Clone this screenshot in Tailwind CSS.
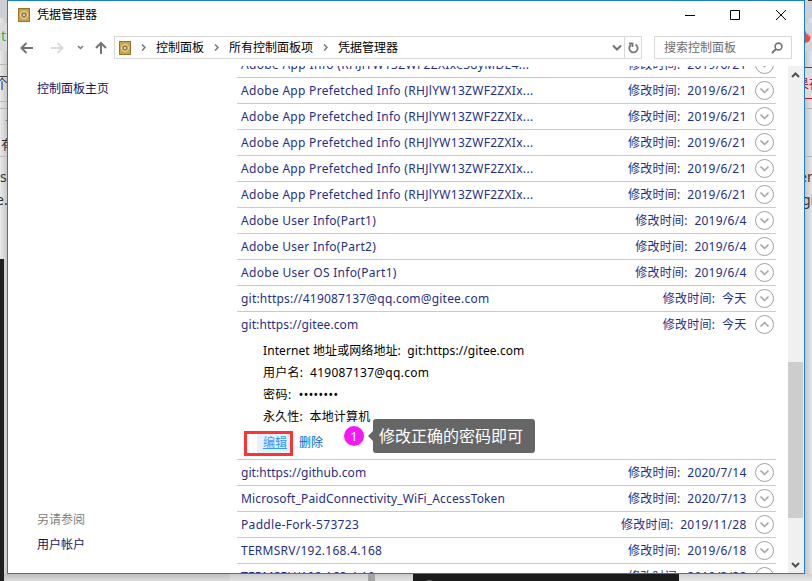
<!DOCTYPE html>
<html lang="zh-CN">
  <head>
    <meta charset="UTF-8" />
    <meta name="viewport" content="width=device-width, initial-scale=1.0" />
    <title>凭据管理器</title>
    <script src="https://cdn.jsdelivr.net/npm/@tailwindcss/browser@4"></script>
  </head>
  <body
    class="relative w-[812px] h-[581px] overflow-hidden bg-[#e6e6e6] font-['Noto_Sans','Noto_Sans_CJK_SC',sans-serif] text-[12px] leading-[16px] text-black"
  >
    <!-- page behind the window -->
    <div class="absolute left-0 top-0 w-[7px] h-[581px] bg-gradient-to-r from-[#e9e9e9] to-[#c8c8c8]">
      <div class="absolute left-0 top-0 w-[7px] h-[18px] bg-[#cdd0d3]"></div>
      <div class="absolute left-0 top-[23px] w-[7px] h-[28px] bg-[#d9dbdc]"></div>
      <div class="absolute left-0 top-[64px] w-[7px] h-px bg-[#b5b5b5]"></div>
      <div class="absolute left-0 top-[76px] w-[7px] h-px bg-[#444]"></div>
      <div class="absolute left-0 top-[101px] w-[7px] h-px bg-[#b5b5b5]"></div>
      <div class="absolute left-0 top-[108px] w-[7px] h-px bg-[#b5b5b5]"></div>
      <div class="absolute left-0 top-[156px] w-[7px] h-px bg-[#bdbdbd]"></div>
      <div class="absolute left-0 top-[259px] w-[4px] h-[322px] bg-[#211f1e]"></div>
      <span class="absolute left-px top-[28px] text-[14px] text-[#1fb85c]">t</span>
      <span class="absolute -left-[5px] top-[76px] text-[14px] text-[#333a6b]">个</span>
      <span class="absolute left-[5px] top-[116px] text-[13px] text-[#777]">首</span>
      <span class="absolute left-px top-[136px] text-[13px] text-[#333]">有</span>
      <span class="absolute left-0 top-[169px] text-[14px] text-[#333]">s</span>
      <span class="absolute -left-[4px] top-[192px] text-[14px] text-[#333]">e.</span>
    </div>
    <div class="absolute left-[805px] top-0 w-[7px] h-[581px] overflow-hidden bg-gradient-to-r from-[#c6c6c6] to-[#e4e4e4]">
      <div class="absolute left-0 top-0 w-[7px] h-[18px] bg-[#cfd0d3]"></div>
      <div class="absolute left-[3px] top-0 w-[4px] h-px bg-[#333]"></div>
      <div class="absolute left-0 top-[23px] w-[7px] h-[28px] bg-[#d5d5d6]"></div>
      <svg class="absolute left-0 top-[30px]" width="6" height="14" viewBox="0 0 6 14">
        <path d="M0 0l2 5 1-2 1 4 1-2c1 3 0 6-2 7L0 13z" fill="#e8503c" />
      </svg>
      <div class="absolute left-0 top-[67px] w-[7px] h-[32px] border-y border-[#c4161c] bg-[#dedada]"></div>
      <span class="absolute -left-[9px] top-[75px] text-[13px] whitespace-nowrap text-[#c4161c]">果存</span>
      <div class="absolute left-0 top-[108px] w-[7px] h-px bg-[#b5b5b5]"></div>
      <div class="absolute left-0 top-[156px] w-[7px] h-px bg-[#b5b5b5]"></div>
      <span class="absolute -left-[6px] top-[169px] text-[14px] text-[#333]">en</span>
      <span class="absolute -left-[3px] top-[192px] text-[14px] text-[#333]">gi</span>
    </div>
    <div class="absolute left-[4px] top-[574px] w-[808px] h-[7px] flex bg-gradient-to-b from-[#bdbdbd] to-[#dcdcdc]">
      <div class="w-[226px]"></div>
      <div class="w-[138px] bg-white/20"></div>
      <div class="w-[7px] bg-[#a3a3a3]"></div>
      <div class="w-[38px] bg-white/20"></div>
      <div class="w-[266px] overflow-hidden bg-[#1b1b1b] pl-[11px] pt-[6px]">
        <div class="size-[11px] rounded-full bg-[#777]"></div>
      </div>
      <div class="flex-1 bg-white/30"></div>
    </div>

    <div class="absolute left-[7px] top-0 w-[798px] h-[574px] flex flex-col border border-[#1b7fd0] bg-white">
      <!-- title bar -->
      <div class="h-[28px] mb-[2px] shrink-0 flex items-center pl-[10px]">
        <svg class="w-[12px] h-[14px]" viewBox="0 0 12 14">
          <rect x=".5" y=".5" width="11" height="13" fill="#c9a250" stroke="#98742a" />
          <circle cx="6" cy="7" r="3.600" fill="#b8923f" stroke="#f0dfae" />
          <circle cx="6" cy="7" r="1.600" fill="#e8e8e4" stroke="#6d6448" stroke-width=".8" />
        </svg>
        <span class="ml-[7px]">凭据管理器</span>
        <svg class="ml-auto mr-[17px]" width="104" height="12" viewBox="0 0 104 12" fill="none" stroke="#000">
          <path d="M2 6.500h10M47.500 1.500h9v9h-9zM93 1l10 10M103 1l-10 10" />
        </svg>
      </div>

      <!-- address bar -->
      <div class="h-[35px] shrink-0 flex items-start pt-[5px]">
        <svg class="w-[106px] h-[23px] shrink-0" viewBox="0 0 106 23" fill="none" stroke-width="2">
          <path d="M25 12H14M18.500 7l-5 5 5 5" stroke="#747474" />
          <path d="M43 12h11M49.500 7l5 5-5 5" stroke="#dadada" />
          <path d="M70 10l2.500 2.500L75 10" stroke="#777" stroke-width="1.500" />
          <path d="M93 18V7M88 12l5-5 5 5" stroke="#747474" />
        </svg>
        <div class="w-[528px] h-[23px] flex items-center border border-[#d9d9d9]">
          <svg class="ml-[4px] w-[12px] h-[14px]" viewBox="0 0 12 14">
            <rect x=".5" y=".5" width="11" height="13" fill="#c9a250" stroke="#98742a" />
            <circle cx="6" cy="7" r="3.600" fill="#b8923f" stroke="#f0dfae" />
            <circle cx="6" cy="7" r="1.600" fill="#e8e8e4" stroke="#6d6448" stroke-width=".8" />
          </svg>
          <svg class="ml-[10px] w-[5px] h-[7px]" viewBox="0 0 5 7"><path d="M1 .5l3 3-3 3" fill="none" stroke="#777" stroke-width="1.500" /></svg>
          <span class="ml-[10px]">控制面板</span>
          <svg class="ml-[10px] w-[5px] h-[7px]" viewBox="0 0 5 7"><path d="M1 .5l3 3-3 3" fill="none" stroke="#777" stroke-width="1.500" /></svg>
          <span class="ml-[10px]">所有控制面板项</span>
          <svg class="ml-[10px] w-[5px] h-[7px]" viewBox="0 0 5 7"><path d="M1 .5l3 3-3 3" fill="none" stroke="#777" stroke-width="1.500" /></svg>
          <span class="ml-[10px]">凭据管理器</span>
          <svg class="ml-auto mr-[2px] w-[10px] h-[6px]" viewBox="0 0 10 6"><path d="M1 .5l4 4 4-4" fill="none" stroke="#707070" stroke-width="2" /></svg>
          <div class="w-[17px] h-full flex items-center justify-center border-l border-[#d9d9d9]">
            <svg class="ml-px w-[11px] h-[12px]" viewBox="0 0 11 12" fill="none" stroke="#777" stroke-width="1.800">
              <path d="M7.500 2.500A4.200 4.200 0 1 1 3 2.800" />
              <path d="M1 1.500h3.500V5" />
            </svg>
          </div>
        </div>
        <div class="ml-[12px] w-[138px] h-[23px] flex items-center justify-between border border-[#d9d9d9] pl-[9px] pr-[8px] text-[#6d6d6d]">
          <span>搜索控制面板</span>
          <svg class="w-[12px] h-[12px]" viewBox="0 0 12 12" fill="none" stroke="#747474">
            <circle cx="7.500" cy="4.500" r="3.400" stroke-width="1.600" />
            <path d="M5 7L1 11" stroke-width="2" />
          </svg>
        </div>
      </div>

      <div class="flex-1 min-h-0 flex">
        <!-- sidebar -->
        <div class="w-[229px] shrink-0 flex flex-col pl-[29px] pt-[15px] pb-[20px]">
          <span class="text-[#15155f]">控制面板主页</span>
          <span class="mt-auto text-[#808080]">另请参阅</span>
          <span class="mt-[9px] text-[#15155f]">用户帐户</span>
        </div>

        <div class="w-[539px] shrink-0 overflow-hidden">
          <div id="list" class="-mt-[14px]"></div>
        </div>

        <!-- scrollbar -->
        <div class="ml-auto w-[16px] flex flex-col items-center bg-[#f0f0f0]">
          <svg class="mt-[6px] mr-px w-[9px] h-[6px]" viewBox="0 0 9 6"><path d="M1 5l3.500-3.500L8 5" fill="none" stroke="#505050" stroke-width="2" /></svg>
          <div class="mt-[284px] mr-px w-[15px] h-[156px] bg-[#cdcdcd]"></div>
          <svg class="mt-auto mr-px mb-[5px] w-[9px] h-[6px]" viewBox="0 0 9 6"><path d="M1 1l3.500 3.500L8 1" fill="none" stroke="#505050" stroke-width="2" /></svg>
        </div>
      </div>
    </div>

    <!-- step marker and tip -->
    <div class="absolute left-[344px] top-[426px] size-[20px] rounded-full bg-[#f518f5] text-center text-[13px] leading-[20px] text-white">1</div>
    <div class="absolute left-[368px] top-[419px] flex items-center">
      <svg class="w-[5px] h-[10px]" viewBox="0 0 5 10"><path d="M5 0v10L0 5z" fill="#666" /></svg>
      <div class="w-[162px] h-[34px] rounded-[3px] bg-[#666] pl-[6px] text-[16px] leading-[34px] whitespace-nowrap text-white">修改正确的密码即可</div>
    </div>

    <script>
      // name, date, letter spacing of the name
      const rows = [
        ["Adobe App Info (RHJlYW13ZWF2ZXIxe38yMDE4...", "2019/6/21", 0.34],
        ["Adobe App Prefetched Info (RHJlYW13ZWF2ZXIx...", "2019/6/21", 0.3],
        ["Adobe App Prefetched Info (RHJlYW13ZWF2ZXIx...", "2019/6/21", 0.3],
        ["Adobe App Prefetched Info (RHJlYW13ZWF2ZXIx...", "2019/6/21", 0.3],
        ["Adobe App Prefetched Info (RHJlYW13ZWF2ZXIx...", "2019/6/21", 0.3],
        ["Adobe App Prefetched Info (RHJlYW13ZWF2ZXIx...", "2019/6/21", 0.3],
        ["Adobe User Info(Part1)", "2019/6/4", 0.27],
        ["Adobe User Info(Part2)", "2019/6/4", 0.27],
        ["Adobe User OS Info(Part1)", "2019/6/4", 0.3],
        ["git:https://419087137@qq.com@gitee.com", "今天", 0.2],
        ["git:https://gitee.com", "今天", 0.1, true],
        ["git:https://github.com", "2020/7/14", 0.06],
        ["Microsoft_PaidConnectivity_WiFi_AccessToken", "2020/7/13", 0.15],
        ["Paddle-Fork-573723", "2019/11/28", 0.32],
        ["TERMSRV/192.168.4.168", "2019/6/18", 0.26],
        ["TERMSRV/192.168.4.19", "2019/3/28", 0.26],
      ];

      const details = `
        <div class="h-[122px] pl-[26px] pt-[6px]">
          <div class="h-[22px] leading-[16px] whitespace-pre tracking-[0.09px]">Internet 地址或网络地址:  git:https://gitee.com</div>
          <div class="h-[22px] leading-[16px] whitespace-pre tracking-[0.27px]">用户名:  419087137@qq.com</div>
          <div class="h-[22px] leading-[16px] whitespace-pre tracking-[0.45px]">密码:  ••••••••</div>
          <div class="h-[22px] leading-[16px] whitespace-pre tracking-[0.17px]">永久性:  本地计算机</div>
          <div class="-ml-[19px] flex items-center">
            <div class="w-[49px] h-[25px] flex border-[3px] border-[#fb3434]">
              <div class="ml-[10px] flex-1 bg-[#e5f1fb] pl-[6px] pt-px whitespace-nowrap text-[#3399ff] underline">编辑</div>
            </div>
            <span class="-mt-[2px] ml-[6px] text-[#0066cc]">删除</span>
          </div>
        </div>`;

      document.getElementById("list").innerHTML = rows
        .map(
          ([name, date, spacing, open]) => `
        <div class="border-b border-[#cacaca]">
          <div class="h-[25px] flex items-center pl-[4px] pr-[2px] text-[#1f2f87]">
            <span class="whitespace-nowrap" style="letter-spacing:${spacing}px">${name}</span>
            <span class="ml-auto mr-[8.5px] whitespace-pre tracking-[0.25px]">修改时间:  ${date}</span>
            <svg class="w-[19px] h-[19px]" viewBox="0 0 19 19" fill="none" stroke="#a0a0a0">
              <circle cx="9.5" cy="9.5" r="9" />
              <path d="${open ? "M5.500 11.500l4-4 4 4" : "M5.500 7.500l4 4 4-4"}" stroke-width="1.500" />
            </svg>
          </div>
          ${open ? details : ""}
        </div>`
        )
        .join("");
    </script>
  </body>
</html>
